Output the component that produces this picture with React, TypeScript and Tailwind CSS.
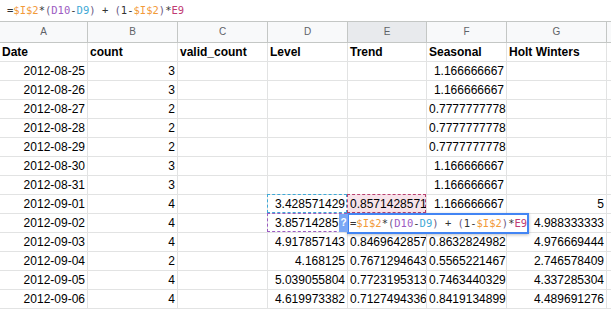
import React from 'react';

type Cell = string | { text: string; box?: 'cyan' | 'pink' | 'purple'; editor?: boolean; help?: boolean };

const widths = ['w-[88px]', 'w-[90px]', 'w-[90px]', 'w-[80px]', 'w-[79px]', 'w-[80px]', 'w-[100px]'];
const letters = ['A', 'B', 'C', 'D', 'E', 'F', 'G'];

const rows: Cell[][] = [
  ['2012-08-25', '3', '', '', '', '1.166666667', ''],
  ['2012-08-26', '3', '', '', '', '1.166666667', ''],
  ['2012-08-27', '2', '', '', '', '0.7777777778', ''],
  ['2012-08-28', '2', '', '', '', '0.7777777778', ''],
  ['2012-08-29', '2', '', '', '', '0.7777777778', ''],
  ['2012-08-30', '3', '', '', '', '1.166666667', ''],
  ['2012-08-31', '3', '', '', '', '1.166666667', ''],
  ['2012-09-01', '4', '', { text: '3.428571429', box: 'cyan' }, { text: '0.8571428571', box: 'pink' }, '1.166666667', '5'],
  ['2012-09-02', '4', '', { text: '3.857142857', box: 'purple', help: true }, { text: '', editor: true }, '', '4.988333333'],
  ['2012-09-03', '4', '', '4.917857143', '0.8469642857', '0.8632824982', '4.976669444'],
  ['2012-09-04', '2', '', '4.168125', '0.7671294643', '0.5565221467', '2.746578409'],
  ['2012-09-05', '4', '', '5.039055804', '0.7723195313', '0.7463440329', '4.337285304'],
  ['2012-09-06', '4', '', '4.619973382', '0.7127494336', '0.8419134899', '4.489691276'],
];

const Formula = () => (
  <span className="font-['DejaVu_Sans_Mono',monospace] text-[10.5px] text-[#333] whitespace-nowrap">
    =<span className="text-[#f29a38]">$I$2</span>*<span className="text-[#6a5a86]">(</span>
    <span className="text-[#9c5cc2]">D10</span>-<span className="text-[#3fa9d6]">D9</span>
    <span className="text-[#6a5a86]">)</span> + <span className="text-[#6a5a86]">(</span>1-
    <span className="text-[#f29a38]">$I$2</span>
    <span className="text-[#6a5a86]">)</span>*<span className="text-[#c13b73]">E9</span>
  </span>
);

const boxColor = {
  cyan: 'border-[#3fa9d6]',
  pink: 'border-[#b8406f] bg-[#f7e3ea]',
  purple: 'border-[#9c5cc2]',
};

export default function App() {
  return (
    <div className="w-[611px] h-[309px] overflow-hidden bg-white font-['Liberation_Sans',Arial,sans-serif] text-[12px] text-black">
      {/* formula bar */}
      <div className="h-[22px] flex items-center pl-[7px] border-b border-[#c4c7c5]">
        <Formula />
      </div>

      {/* column letters */}
      <div className="flex h-[21px] bg-[#f8f9fa]">
        {letters.map((l, i) => (
          <div
            key={l}
            className={`${widths[i]} shrink-0 border-r border-b border-[#c4c7c5] text-center text-[10px] leading-[20px] text-[#5f6368] ${
              l === 'E' ? 'bg-[#e8eaed]' : ''
            }`}
          >
            {l}
          </div>
        ))}
        <div className="flex-1 border-b border-[#c4c7c5]" />
      </div>

      {/* header row */}
      <div className="flex h-[19px]">
        {['Date', 'count', 'valid_count', 'Level', 'Trend', 'Seasonal', 'Holt Winters'].map((h, i) => (
          <div
            key={h}
            className={`${widths[i]} shrink-0 border-r border-b border-[#e2e3e3] px-[2px] font-bold leading-[18px] whitespace-nowrap overflow-hidden`}
          >
            {h}
          </div>
        ))}
        <div className="flex-1 border-b border-[#e2e3e3]" />
      </div>

      {rows.map((row, r) => (
        <div key={r} className="flex h-[19px]">
          {row.map((c, i) => {
            const cell = typeof c === 'string' ? { text: c } : c;
            return (
              <div
                key={i}
                className={`${widths[i]} shrink-0 relative border-r border-b border-[#e2e3e3] h-[19px] ${
                  cell.editor ? 'z-10' : ''
                }`}
              >
                {cell.box && (
                  <div className={`absolute top-[-1px] left-[-1px] right-0 bottom-0 border border-dashed ${boxColor[cell.box]}`} />
                )}
                {cell.text && (
                  <div className="relative px-[2px] text-right leading-[18px] whitespace-nowrap overflow-hidden">{cell.text}</div>
                )}
                {cell.help && (
                  <div className="absolute right-[-1px] top-0 w-[9px] h-[18px] bg-[#7aa7f5] text-white text-[10px] font-bold leading-[18px] text-center z-20">
                    ?
                  </div>
                )}
                {cell.editor && (
                  <div className="absolute left-[-1px] top-[-1px] w-[182px] h-[21px] bg-white border-2 border-[#4285f4] shadow-[0_1px_3px_rgba(0,0,0,0.25)] flex items-center pl-[1px]">
                    <Formula />
                  </div>
                )}
              </div>
            );
          })}
          <div className="flex-1 border-b border-[#e2e3e3]" />
        </div>
      ))}
    </div>
  );
}
